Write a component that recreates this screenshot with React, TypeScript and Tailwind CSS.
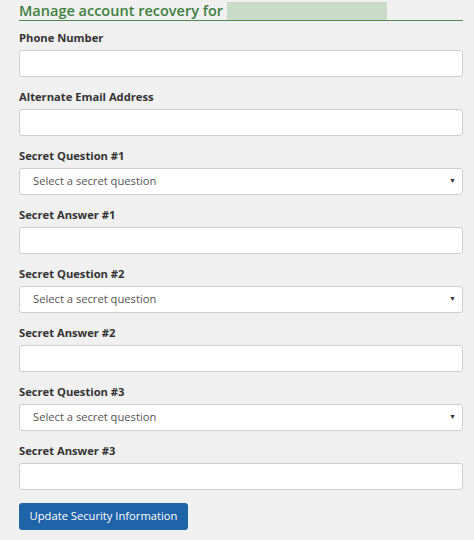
const fields: { label: string; kind: "input" | "select" }[] = [
  { label: "Phone Number", kind: "input" },
  { label: "Alternate Email Address", kind: "input" },
  { label: "Secret Question #1", kind: "select" },
  { label: "Secret Answer #1", kind: "input" },
  { label: "Secret Question #2", kind: "select" },
  { label: "Secret Answer #2", kind: "input" },
  { label: "Secret Question #3", kind: "select" },
  { label: "Secret Answer #3", kind: "input" },
];

export default function App() {
  return (
    <div
      className="w-[474px] h-[540px] bg-[#f0f0f0] px-[19px] pt-[2px]"
      style={{ fontFamily: '"Open Sans", sans-serif' }}
    >
      <div className="flex items-end h-[19px] border-b border-[#4f8a4f] w-[444px]">
        <h2 className="text-[14.5px] leading-[19px] font-semibold text-[#3f7f3f] whitespace-nowrap">
          Manage account recovery for
        </h2>
        <div className="ml-[4px] w-[160px] h-[18px] bg-[#c8dcc8]" />
      </div>
      <form className="mt-[9px] w-[444px]">
        {fields.map((f) => (
          <div key={f.label} className="mb-[12px]">
            <div className="text-[11.2px] leading-[16px] font-bold text-[#333] mb-[4px]">
              {f.label}
            </div>
            {f.kind === "input" ? (
              <div className="h-[27px] bg-white border border-[#cfcfcf] rounded-[3px]" />
            ) : (
              <div className="h-[27px] bg-white border border-[#cfcfcf] rounded-[3px] flex items-center justify-between pl-[13px] pr-[6px]">
                <span className="text-[11.2px] text-[#555]">Select a secret question</span>
                <span className="text-[7px] text-[#333]">▼</span>
              </div>
            )}
          </div>
        ))}
        <button
          type="button"
          className="mt-[0px] h-[27px] w-[169px] rounded-[3px] bg-[#1f63a8] text-white text-[11.2px]"
        >
          Update Security Information
        </button>
      </form>
    </div>
  );
}
